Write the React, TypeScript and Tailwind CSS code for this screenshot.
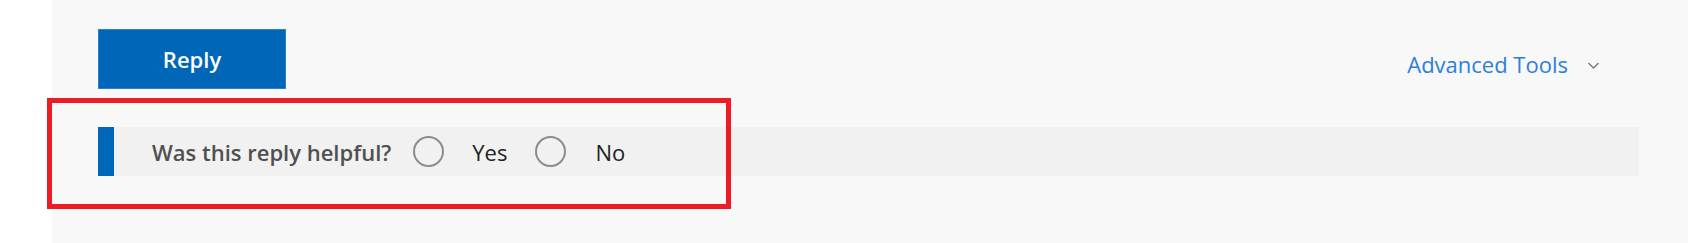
import React from "react";

function Radio() {
  return <span className="inline-block w-[31px] h-[31px] rounded-full border-2 border-[#8c8c8c] bg-transparent shrink-0" />;
}

export default function App() {
  return (
    <div className="w-[1698px] h-[243px] bg-white flex relative" style={{ fontFamily: '"Open Sans", "Noto Sans", sans-serif' }}>
      <div className="ml-[52px] w-[1636px] h-full bg-[#f8f8f8] flex flex-col pl-[46px]">
        <div className="flex items-start justify-between mt-[29px] pr-[88px]">
          <button className="w-[188px] h-[60px] bg-[#0067b8] border border-[#2a7fd0] text-white text-[22px] leading-[30px] font-semibold flex items-center justify-center">
            Reply
          </button>
          <div className="flex items-center mt-[20px] text-[#2d7fd9] text-[22px] leading-[30px]">
            <span>Advanced Tools</span>
            <svg className="ml-[19px] mt-[2px]" width="13" height="9" viewBox="0 0 13 9" fill="none">
              <path d="M1.5 2 L6.5 7 L11.5 2" stroke="#7a7a7a" strokeWidth="1.4" />
            </svg>
          </div>
        </div>
        <div className="mt-[38px] mr-[49px] h-[49px] flex items-center bg-[#f1f1f1]">
          <div className="w-[16px] h-full bg-[#0067b8]" />
          <span className="ml-[38px] text-[22px] leading-[30px] font-semibold text-[#505050]">Was this reply helpful?</span>
          <span className="ml-[22px] flex"><Radio /></span>
          <span className="ml-[28px] text-[22px] leading-[30px] text-[#222222]">Yes</span>
          <span className="ml-[28px] flex"><Radio /></span>
          <span className="ml-[29px] text-[22px] leading-[30px] text-[#222222]">No</span>
        </div>
      </div>
      <div className="absolute left-[47px] top-[98px] w-[684px] h-[111px] border-[5px] border-[#ed1c24]" />
    </div>
  );
}
